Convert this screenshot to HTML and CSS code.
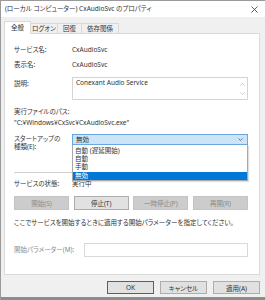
FILE: index.html
```html
<!DOCTYPE html>
<html lang="ja">

<head>
    <meta charset="UTF-8">
    <title>CxAudioSvc のプロパティ</title>
    <link rel="stylesheet" href="styles.css">
</head>

<body>

    <div class="window">

        <div class="titlebar">
            <span>(ローカル コンピューター) CxAudioSvc のプロパティ</span>
            <svg class="closeIcon" width="7" height="7" viewBox="0 0 7 7">
                <path d="M0.5 0.5 L6.5 6.5 M6.5 0.5 L0.5 6.5" stroke="#333" stroke-width="0.8" fill="none" />
            </svg>
        </div>

        <div class="tabs">
            <div class="tab active">全般</div>
            <div class="tab tabLogon">ログオン</div>
            <div class="tab tabRecovery">回復</div>
            <div class="tab tabDepends">依存関係</div>
        </div>

        <div class="panel">

            <div class="row rowName">
                <span>サービス名:</span>
                <span>CxAudioSvc</span>
            </div>

            <div class="row rowDisplay">
                <span>表示名:</span>
                <span>CxAudioSvc</span>
            </div>

            <div class="row rowDesc">
                <span class="descLabel">説明:</span>
                <div class="descBox">
                    <span class="descText">Conexant Audio Service</span>
                    <div class="scrollArrows">
                        <svg width="5" height="3" viewBox="0 0 5 3"><path d="M0.5 2.5 L2.5 0.5 L4.5 2.5" stroke="#b5b5b5" stroke-width="0.7" fill="none" /></svg>
                        <svg width="5" height="3" viewBox="0 0 5 3"><path d="M0.5 0.5 L2.5 2.5 L4.5 0.5" stroke="#b5b5b5" stroke-width="0.7" fill="none" /></svg>
                    </div>
                </div>
            </div>

            <div class="pathLabel">実行ファイルのパス:</div>
            <div class="pathValue">"C:¥Windows¥CxSvc¥CxAudioSvc.exe"</div>

            <div class="row rowStartup">
                <span class="startupLabel">スタートアップの<br>種類(E):</span>
                <div class="combo">
                    <div class="comboBox">
                        <span>無効</span>
                        <svg width="5" height="3" viewBox="0 0 5 3"><path d="M0.5 0.5 L2.5 2.5 L4.5 0.5" stroke="#444" stroke-width="0.7" fill="none" /></svg>
                    </div>
                    <div class="comboList">
                        <div class="comboItem">自動 (遅延開始)</div>
                        <div class="comboItem">自動</div>
                        <div class="comboItem">手動</div>
                        <div class="comboItem selected">無効</div>
                    </div>
                </div>
            </div>

            <div class="separator"></div>

            <div class="row rowStatus">
                <span>サービスの状態:</span>
                <span>実行中</span>
            </div>

            <div class="serviceButtons">
                <button class="btn" disabled>開始(S)</button>
                <button class="btn">停止(T)</button>
                <button class="btn" disabled>一時停止(P)</button>
                <button class="btn" disabled>再開(R)</button>
            </div>

            <div class="hint">ここでサービスを開始するときに適用する開始パラメーターを指定してください。</div>

            <div class="paramRow">
                <span class="paramLabel">開始パラメーター(M):</span>
                <div class="paramInput"></div>
            </div>

        </div>

        <div class="footer">
            <button class="btn dlgBtn okBtn">OK</button>
            <button class="btn dlgBtn">キャンセル</button>
            <button class="btn dlgBtn">適用(A)</button>
        </div>

        <div class="behind"></div>

    </div>

</body>

</html>
```

FILE: styles.css
```css
body,
html {
    margin: 0;
    padding: 0;
}

body {
    font-family: "Noto Sans", "Noto Sans CJK JP", sans-serif;
    font-size: 6.5px;
    line-height: 10px;
    color: #333;
    font-feature-settings: "palt";
}

.window {
    width: 265px;
    height: 300px;
    box-sizing: border-box;
    background-color: #f0f0f0;
    border-top: 1px solid #9a9a9a;
    border-left: 1px solid #9a9a9a;
    display: flex;
    flex-direction: column;
}

.titlebar {
    height: 16px;
    flex-shrink: 0;
    background-color: #fff;
    display: flex;
    align-items: center;
    justify-content: space-between;
    padding: 0 7px 0 4px;
}

.closeIcon {
    display: block;
}

.tabs {
    display: flex;
    align-items: flex-end;
    height: 12px;
    margin-top: 4px;
    padding-left: 3px;
    position: relative;
    z-index: 1;
}

.tab {
    height: 10px;
    box-sizing: border-box;
    border: 1px solid #d9d9d9;
    border-bottom: none;
    border-left: none;
    background-color: #f0f0f0;
    text-align: center;
    line-height: 9px;
    width: 27px;
}

.tab.active {
    height: 13px;
    margin-bottom: -1px;
    background-color: #fff;
    border-left: 1px solid #d9d9d9;
    line-height: 12px;
}

.tabRecovery {
    width: 24px;
}

.tabDepends {
    width: 37px;
}

.panel {
    height: 242px;
    flex-shrink: 0;
    box-sizing: border-box;
    margin: 0 5px 0 3px;
    background-color: #fff;
    border: 1px solid #d9d9d9;
    padding: 11px 11px 0 9px;
}

.row {
    display: grid;
    grid-template-columns: 58px 1fr;
}

.rowDisplay {
    margin-top: 5px;
}

.rowDesc {
    margin-top: 7px;
}

.descLabel {
    padding-top: 2px;
}

.descBox {
    height: 23px;
    box-sizing: border-box;
    border: 1px solid #d4d4d4;
    display: flex;
    justify-content: space-between;
}

.descText {
    padding-left: 3px;
    line-height: 9px;
}

.scrollArrows {
    width: 9px;
    display: flex;
    flex-direction: column;
    align-items: center;
    justify-content: space-between;
    padding: 5px 0 4px;
}

.scrollArrows svg {
    display: block;
}

.pathLabel {
    margin-top: 7px;
}

.pathValue {
    margin-top: 1px;
}

.rowStartup {
    margin-top: 6px;
}

.startupLabel {
    line-height: 8px;
    padding-top: 1px;
}

.combo {
    position: relative;
}

.comboBox {
    height: 11px;
    box-sizing: border-box;
    background-color: #cce4f7;
    border: 1px solid #6aa7df;
    display: flex;
    align-items: center;
    justify-content: space-between;
    padding: 0 4px 0 3px;
}

.comboBox svg {
    display: block;
}

.comboList {
    position: absolute;
    top: 11px;
    left: 0;
    right: 0;
    height: 36px;
    box-sizing: border-box;
    background-color: #fff;
    border: 1px solid #a8a8a8;
    border-top: none;
    box-shadow: 1px 1px 1px rgba(0, 0, 0, 0.12);
    padding-top: 2px;
    z-index: 2;
}

.comboItem {
    height: 8px;
    line-height: 8px;
    padding-left: 2px;
}

.comboItem.selected {
    margin-top: 1px;
    height: 8px;
    background-color: #0078d7;
    color: #fff;
}

.separator {
    margin-top: 21px;
    height: 1px;
    background-color: #cfcfcf;
}

.rowStatus {
    margin-top: 6px;
}

.serviceButtons {
    margin-top: 7px;
    display: grid;
    grid-template-columns: 55px 55px 55px 55px;
    justify-content: space-between;
}

.btn {
    height: 14px;
    box-sizing: border-box;
    margin: 0;
    padding: 0;
    font-family: inherit;
    font-size: 6.5px;
    font-feature-settings: "palt";
    color: #333;
    background-color: #e1e1e1;
    border: 1px solid #adadad;
}

.btn:disabled {
    background-color: #cccccc;
    border-color: #c4c4c4;
    color: #8a8a8a;
}

.hint {
    margin-top: 8px;
}

.paramRow {
    margin-top: 15px;
    display: grid;
    grid-template-columns: 70px 1fr;
    align-items: center;
}

.paramLabel {
    color: #8a8a8a;
}

.paramInput {
    height: 14px;
    box-sizing: border-box;
    border: 1px solid #d9d9d9;
}

.footer {
    display: flex;
    justify-content: flex-end;
    gap: 6px;
    padding: 6px 5px 0 0;
}

.dlgBtn {
    width: 47px;
    height: 13px;
}

.okBtn {
    border-color: #0078d7;
}

.behind {
    margin-top: auto;
    height: 3px;
    background-color: #8c8c8c;
}
```
